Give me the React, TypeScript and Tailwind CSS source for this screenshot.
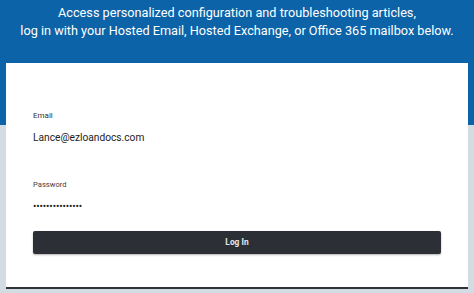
export default function App() {
  return (
    <div
      className="h-[293px] w-[474px] overflow-hidden bg-[linear-gradient(to_bottom,#0c63a8_125px,#d4dce3_125px)]"
      style={{ fontFamily: 'Roboto, "Liberation Sans", sans-serif' }}
    >
      {/* Intro text */}
      <div className="pt-[4px] text-center text-[12.7px] leading-[18px] text-white">
        <p>Access personalized configuration and troubleshooting articles,</p>
        <p>log in with your Hosted Email, Hosted Exchange, or Office 365 mailbox below.</p>
      </div>

      {/* Login card */}
      <div className="mx-[6px] mt-[23px] h-[226px] border-b-2 border-[#2f3338] bg-white px-[27px] pt-[47px]">
        <label className="block text-[8px] leading-[12px] text-[#333]">Email</label>
        <div className="mt-[8px] text-[10.2px] leading-[16px] text-[#222]">Lance@ezloandocs.com</div>

        <label className="mt-[33px] block text-[7.6px] leading-[12px] text-[#4a3a3a]">Password</label>
        <div className="mt-[9px] text-[10px] leading-[14px] tracking-[-0.1px] text-[#222]">
          •••••••••••••••
        </div>

        <button className="mt-[17px] flex h-[23px] w-full items-center justify-center rounded-[2px] bg-[#2c2f36] text-[8.4px] font-bold text-[#e6e6e6] shadow-[0_1px_2px_rgba(0,0,0,0.3)]">
          Log In
        </button>
      </div>
    </div>
  );
}
